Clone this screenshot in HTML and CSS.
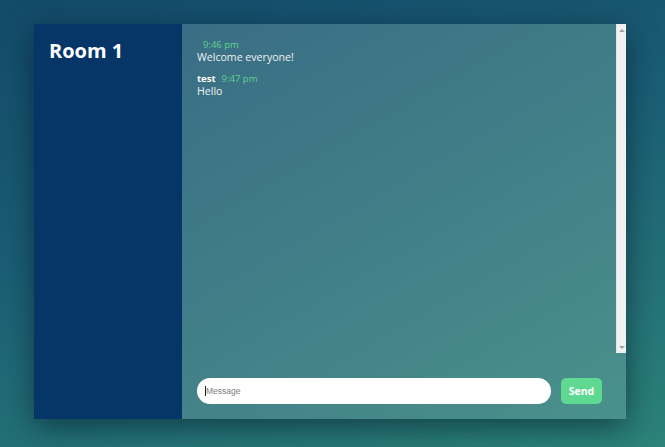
FILE: index.html
```html
<!DOCTYPE html>
<html lang="en">
<head>
<meta charset="utf-8">
<title>Chat</title>
<link rel="stylesheet" href="styles.css">
</head>
<body>
<div class="page">
  <div class="chat">
    <aside class="sidebar">
      <h1 class="room">Room 1</h1>
    </aside>
    <main class="main">
      <div class="messages-wrap">
        <div class="messages">
          <div class="message">
            <div class="meta"><span class="user"></span><span class="time">9:46 pm</span></div>
            <div class="text">Welcome everyone!</div>
          </div>
          <div class="message">
            <div class="meta"><span class="user">test</span><span class="time">9:47 pm</span></div>
            <div class="text">Hello</div>
          </div>
        </div>
        <div class="scrollbar">
          <span class="arrow up"></span>
          <span class="arrow down"></span>
        </div>
      </div>
      <form class="composer">
        <div class="field">
          <span class="caret"></span>
          <input class="input" type="text" placeholder="Message">
        </div>
        <button class="send" type="button">Send</button>
      </form>
    </main>
  </div>
</div>
</body>
</html>
```
FILE: styles.css
```css
* { box-sizing: border-box; }
html, body { margin: 0; padding: 0; }
body {
  width: 665px;
  height: 447px;
  overflow: hidden;
  font-family: "Open Sans", "DejaVu Sans", sans-serif;
  background: linear-gradient(165deg, #134a69 0%, #1b5f75 45%, #2c8379 100%);
}
.page {
  padding: 24px 0 0 34px;
}
.chat {
  display: flex;
  width: 592px;
  height: 395px;
  box-shadow: 0 8px 28px rgba(0, 20, 35, 0.55);
}
.sidebar {
  width: 148px;
  flex: none;
  background: #063567;
  padding: 14px 15px;
}
.room {
  margin: 0;
  color: #ffffff;
  font-size: 20px;
  line-height: 25px;
  font-weight: 700;
}
.main {
  flex: 1;
  display: flex;
  flex-direction: column;
  background: linear-gradient(150deg, #3a6d85 0%, #417f88 50%, #4a918b 100%);
}
.messages-wrap {
  height: 329px;
  display: flex;
}
.messages {
  flex: 1;
  padding: 15px 15px 0 15px;
}
.message {
  margin-bottom: 9px;
}
.meta {
  display: flex;
  gap: 6px;
  font-size: 9.5px;
  line-height: 12px;
}
.user {
  color: #ffffff;
  font-weight: 700;
}
.time {
  color: #5fd38e;
}
.text {
  color: #eef3f4;
  font-size: 10.6px;
  line-height: 12.5px;
}
.scrollbar {
  width: 10px;
  flex: none;
  background: #f1f1f1;
  border-left: 1px solid #e2e6e6;
  display: flex;
  flex-direction: column;
  justify-content: space-between;
  align-items: center;
  padding: 5px 0 4px;
}
.arrow {
  width: 0;
  height: 0;
  border-left: 3px solid transparent;
  border-right: 3px solid transparent;
}
.arrow.up { border-bottom: 3px solid #a3a3a3; }
.arrow.down { border-top: 3px solid #a3a3a3; }
.composer {
  flex: 1;
  margin: 0;
  display: flex;
  align-items: flex-start;
  padding: 25px 24px 0 15px;
  gap: 10px;
}
.field {
  flex: 1;
  height: 26px;
  border-radius: 13px;
  background: #ffffff;
  display: flex;
  align-items: center;
  padding-left: 8px;
}
.caret {
  width: 1px;
  height: 10px;
  background: #222;
  flex: none;
}
.input {
  flex: 1;
  min-width: 0;
  height: 26px;
  border: none;
  background: transparent;
  padding: 0;
  font-family: "Liberation Sans", Arial, sans-serif;
  font-size: 8.5px;
  outline: none;
}
.input::placeholder { color: #7d7d7d; }
.send {
  width: 41px;
  height: 26px;
  flex: none;
  border: none;
  border-radius: 5px;
  background: #5fd892;
  color: #ffffff;
  font-family: "Open Sans", "DejaVu Sans", sans-serif;
  font-weight: 700;
  font-size: 10.5px;
  padding: 0;
}
```
